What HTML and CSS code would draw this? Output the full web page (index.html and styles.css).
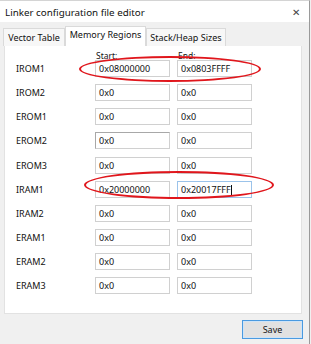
FILE: index.html
```html
<!DOCTYPE html>
<html lang="en">
<head>
<meta charset="UTF-8">
<title>Linker configuration file editor</title>
<link rel="stylesheet" href="styles.css">
</head>
<body>

<div class="window">

<div class="titlebar">
<span class="title">Linker configuration file editor</span>
<span class="close">✕</span>
</div>

<div class="content">

<div class="tabs">
<div class="tab">Vector Table</div>
<div class="tab active">Memory Regions</div>
<div class="tab">Stack/Heap Sizes</div>
</div>

<div class="panel">
<div class="regions">

<div class="head"><span></span><span>Start:</span><span>End:</span></div>

<div class="row"><span class="name">IROM1</span><div class="field">0x08000000</div><div class="field">0x0803FFFF</div></div>
<div class="row"><span class="name">IROM2</span><div class="field">0x0</div><div class="field">0x0</div></div>
<div class="row"><span class="name">EROM1</span><div class="field">0x0</div><div class="field">0x0</div></div>
<div class="row"><span class="name">EROM2</span><div class="field dark">0x0</div><div class="field">0x0</div></div>
<div class="row"><span class="name">EROM3</span><div class="field">0x0</div><div class="field">0x0</div></div>
<div class="row"><span class="name">IRAM1</span><div class="field">0x20000000</div><div class="field focus">0x20017FFF<span class="caret"></span></div></div>
<div class="row"><span class="name">IRAM2</span><div class="field">0x0</div><div class="field">0x0</div></div>
<div class="row"><span class="name">ERAM1</span><div class="field">0x0</div><div class="field">0x0</div></div>
<div class="row"><span class="name">ERAM2</span><div class="field">0x0</div><div class="field">0x0</div></div>
<div class="row"><span class="name">ERAM3</span><div class="field">0x0</div><div class="field">0x0</div></div>

<!-- red marks drawn over the form -->
<div class="ring ring1"></div>
<div class="ring ring2"></div>

</div>
</div>

<div class="footer">
<button class="save">Save</button>
</div>

</div>

</div>

</body>
</html>
```

FILE: styles.css
```css
body{
    margin:0;
    font-family:"Noto Sans","Open Sans",sans-serif;
    font-size:9px;
    color:#111;
    background:#f0f0f0;
}

.window{
    width:309px;
    height:343px;
    background:#f0f0f0;
    border-top:1px solid #d4d4d4;
    border-right:1px solid #9a9a9a;
    display:flex;
    flex-direction:column;
}

.titlebar{
    height:21px;
    background:white;
    display:flex;
    align-items:center;
    justify-content:space-between;
    padding:0 9px 0 5px;
}

.title{
    font-size:9.8px;
    padding-top:1px;
}

.close{
    font-size:10px;
    color:#444;
}

.content{
    flex:1;
    display:flex;
    flex-direction:column;
    padding:4px 7px 0 4px;
}

.tabs{
    display:flex;
    align-items:flex-end;
    height:20px;
    margin-left:-1px;
}

.tab{
    padding:0;
    text-align:center;
    white-space:nowrap;
    line-height:17px;
    background:#f7f7f7;
    border:1px solid #dadada;
    border-bottom:none;
    box-sizing:border-box;
    height:18px;
}

.tab:first-child{
    width:62px;
}

.tab.active{
    background:white;
    height:20px;
    line-height:16px;
    width:81px;
}

.tab:last-child{
    width:80px;
}

.panel{
    height:268px;
    background:white;
    border:1px solid #e2e2e2;
    border-top:none;
    box-sizing:border-box;
    padding:5px 0 0 10px;
}

.regions{
    position:relative;
    display:flex;
    flex-direction:column;
    gap:7.13px;
}

.head,
.row{
    display:grid;
    grid-template-columns:73px 75px 75px;
    column-gap:7px;
    align-items:center;
}

.head{
    height:9px;
    line-height:9px;
    margin-bottom:-7.13px;
    font-size:8.5px;
}

.head span{
    padding-left:1px;
}

.name{
    padding-left:1px;
}

.field{
    height:17px;
    border:1px solid #d0d0d0;
    box-sizing:border-box;
    padding-left:3px;
    line-height:15px;
    background:white;
}

.field.dark{
    border-color:#a8a8a8;
    border-right-color:#d0d0d0;
    border-bottom-color:#d0d0d0;
}

.field.focus{
    border-color:#9bc3ea;
}

.caret{
    display:inline-block;
    width:1px;
    height:10px;
    background:#111;
    vertical-align:-2px;
}

.ring{
    position:absolute;
    border:2px solid #e0161c;
    border-radius:50%;
    box-sizing:border-box;
}

.ring1{
    left:64px;
    top:5px;
    width:182px;
    height:26px;
}

.ring2{
    left:69px;
    top:120px;
    width:190px;
    height:28px;
}

.footer{
    display:flex;
    justify-content:flex-end;
    padding-top:6px;
}

.save{
    width:61px;
    height:19px;
    font-family:inherit;
    font-size:9px;
    color:#111;
    background:#e1e1e1;
    border:1px solid #4a9ae0;
    box-shadow:inset 0 0 0 1px #cfe4f7;
    padding:0;
    margin-right:-1px;
}
```
